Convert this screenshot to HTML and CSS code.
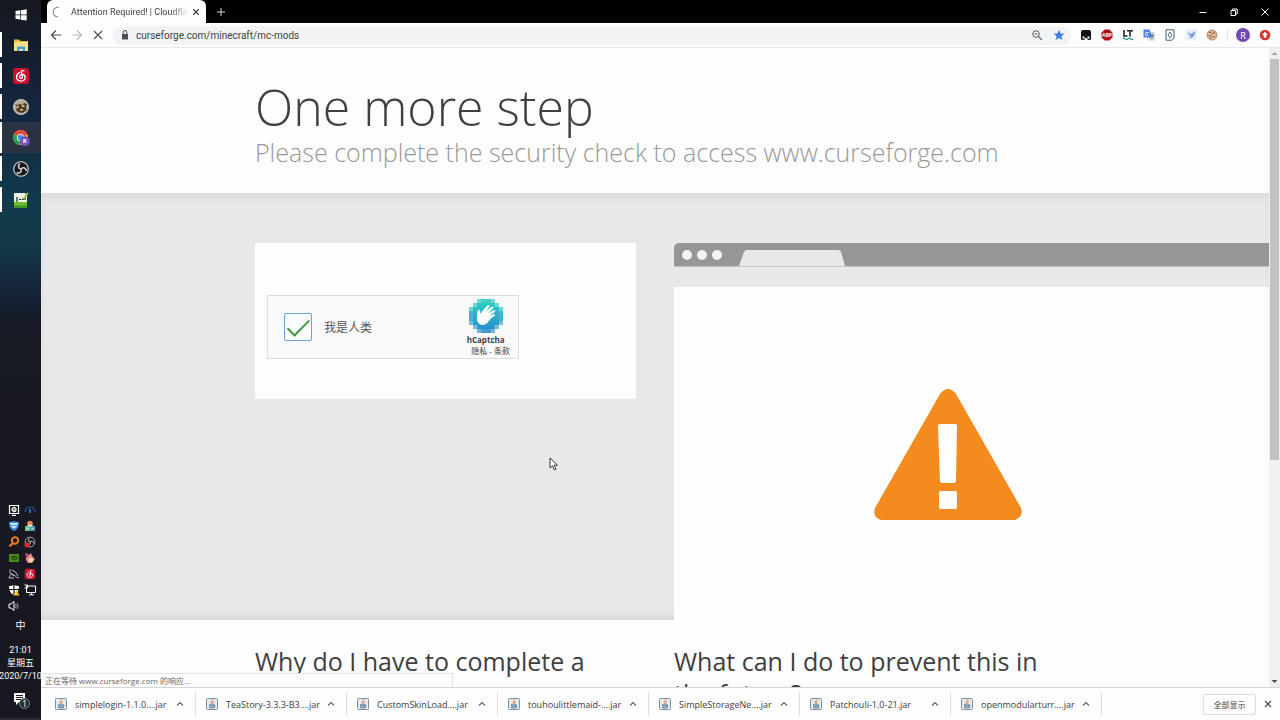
FILE: index.html
```html
<!DOCTYPE html>
<html lang="zh-CN">
<head>
    <meta charset="UTF-8">
    <meta name="viewport" content="width=device-width, initial-scale=1.0">
    <title>Attention Required! | Cloudflare</title>
    <link rel="stylesheet" href="styles.css">
</head>
<body>
    <!-- shared icons -->
    <svg class="sprite" width="0" height="0" aria-hidden="true">
        <symbol id="java" viewBox="0 0 12 12">
            <rect x=".5" y=".5" width="11" height="11" rx="1" fill="#e3ebf1" stroke="#7d8f9c"/>
            <path d="M6.800 1.500C7 3 4 3.200 5.400 5.600M7.800 3.200C5.800 4.300 7.300 5 6.400 6" fill="none" stroke="#d9783a" stroke-width="1"/>
            <path d="M3.300 6.800h4.600v1.400H3.700zM3 9.500q3 1 6 0M8 7c1.800 0 1 1.400 0 1.400" fill="none" stroke="#47718f" stroke-width=".9"/>
        </symbol>
        <symbol id="caret" viewBox="0 0 8 8">
            <path d="M1 5.500 4 2.500l3 3" fill="none" stroke="#5f6368" stroke-width="1.1"/>
        </symbol>
        <symbol id="netease" viewBox="0 0 18 18">
            <rect x="1" y="1" width="16" height="16" rx="3" fill="#c8102e"/>
            <path d="M12 3.800c-2-.8-3 .3-2.600 1.900l1 3.800c.4 2.300-2.800 2.500-2.800.2 0-3 5.600-3.300 5.600 1 0 4.600-8.600 4.600-8.600-.6 0-2.200 1.200-3.800 3-4.400" fill="none" stroke="#fff" stroke-width="1.3" stroke-linecap="round"/>
        </symbol>
        <symbol id="obs" viewBox="0 0 18 18">
            <circle cx="9" cy="9" r="7.300" fill="#17181c" stroke="#d5d5d8" stroke-width="1.1"/>
            <path d="M9 9C5.800 8.500 5.800 5 8 3.600M9 9c1.200 3-1.500 5-4.500 3.600M9 9c2-2.500 5.500-1 5.400 2" fill="none" stroke="#d5d5d8" stroke-width="1.500"/>
        </symbol>
    </svg>

    <div class="desktop">
        <aside class="taskbar">
            <nav class="apps">
                <button class="app start" aria-label="开始">
                    <svg viewBox="0 0 18 18"><path d="M3.500 5 8 4.300v4.200H3.500zM8.700 4.200l6-.9v5.200h-6zM3.500 9.300H8v4.200l-4.500-.7zM8.700 9.300h6v5.300l-6-.9z" fill="#fff"/></svg>
                </button>
                <button class="app open" aria-label="文件资源管理器">
                    <svg viewBox="0 0 18 18"><path d="M2 3.500h5l1.500 1.500H16v10H2z" fill="#e9bd4a"/><path d="M2 6h14v9H2z" fill="#fbe08a"/><path d="M5 15v-4.500h8V15h-2.200v-2H7.200v2z" fill="#39a7dc"/></svg>
                </button>
                <button class="app open" aria-label="网易云音乐"><svg><use href="#netease"/></svg></button>
                <button class="app open" aria-label="游戏">
                    <svg viewBox="0 0 18 18"><circle cx="9" cy="9" r="7.800" fill="#b3aaa0"/><path d="M3 5.500 5 7l3-1 2 1 2-2 3 1-1 4 1 2-3 2-2 1-4-1-2-2 1-2z" fill="#4a3726"/><path d="M4.500 8l2-.5.500 2-1.500 1zM9 8l2.500-1.500L13 8l-2 1.500zM7 12l3-1.500 1.500 1.500-2 1z" fill="#d9b779"/><circle cx="9" cy="9" r="7.500" fill="none" stroke="#cfcac5" stroke-width=".8"/></svg>
                </button>
                <button class="app open active" aria-label="Chrome">
                    <svg viewBox="0 0 18 18"><circle cx="8.500" cy="8.500" r="7.500" fill="#e9b93b"/><path d="M8.500 8.500 2 4.700A7.500 7.500 0 0 1 15.500 5.500z" fill="#df4b3b"/><path d="M8.500 8.500 2 4.700A7.500 7.500 0 0 0 8 16z" fill="#2e9e5b"/><circle cx="8.500" cy="8.500" r="3.600" fill="#fff"/><circle cx="8.500" cy="8.500" r="2.800" fill="#4a8af4"/><circle cx="12.800" cy="12.300" r="5" fill="#7550bb"/><text x="12.800" y="14.300" class="badge-letter">R</text></svg>
                </button>
                <button class="app open" aria-label="OBS"><svg><use href="#obs"/></svg></button>
                <button class="app open" aria-label="Notepad++">
                    <svg viewBox="0 0 18 18"><path d="M2 2h11l2 2v13H2z" fill="#eef3e4"/><path d="M2 11h13v6H2z" fill="#6fbe2f"/><path d="M2 14.500h13V17H2z" fill="#3f9427"/><path d="M5 6v5M7 8.500h2M10 8.500h2M13 6v3" stroke="#1d2a1d" stroke-width="1.200"/><path d="m11 8 5-6" stroke="#a5cb4b" stroke-width="1.800"/></svg>
                </button>
            </nav>

            <div class="tray">
                <svg viewBox="0 0 12 12"><path d="M1.500 1.500h9v8h-9zM4 11.300h4" fill="none" stroke="#fff" stroke-width="1.200"/><circle cx="6" cy="5.500" r="2" fill="none" stroke="#fff" stroke-width="1.200"/><path d="M6 2.500v6" stroke="#fff"/></svg>
                <svg viewBox="0 0 12 12"><path d="M1 8a5 5 0 0 1 10 0" fill="none" stroke="#184d8c" stroke-width="1.500"/><path d="M6 5v4" stroke="#2a78c8" stroke-width="1.800"/></svg>
                <svg viewBox="0 0 12 12"><path d="M1 2q3 0 5-1 2 1 5 1 0 7-5 9-5-2-5-9z" fill="#3a94e0"/><path d="M2.500 3.500Q6 5 9.500 3.500M3.500 6 6 7.500 8.500 6" fill="none" stroke="#fff" stroke-width="1.400"/></svg>
                <svg viewBox="0 0 12 12"><path d="M1 6h5v5H1z" fill="#68c48b"/><path d="M6 6h5v5H6z" fill="#4b9eb6"/><circle cx="6" cy="3.500" r="2.800" fill="#e7824f"/><path d="M4 5h4v1H4zM2.500 8.500h2M7.500 8.500h2" stroke="#f1dfc2" fill="#f1dfc2"/></svg>
                <svg viewBox="0 0 12 12"><circle cx="7" cy="4.500" r="3.200" fill="none" stroke="#ec7a25" stroke-width="2"/><path d="M4.800 7 1.500 10.500" stroke="#ec7a25" stroke-width="2.200"/></svg>
                <svg viewBox="0 0 12 12"><use href="#obs" width="12" height="12"/><circle cx="3" cy="9" r="2.500" fill="#e02c2c"/></svg>
                <svg viewBox="0 0 12 12"><path d="M1 2h10v8H1z" fill="#4c8c17"/><path d="M2.500 6Q6 2 9.500 6 6 9.500 4 6.500 6 4.500 7.300 6" fill="none" stroke="#1c3808"/></svg>
                <svg viewBox="0 0 12 12"><path d="m2 1 3 2 2-2 1 3 3 3-3 4H4L2 8z" fill="#f28b83"/><path d="m1 1 4 3-3 2z" fill="#b5338b"/><circle cx="7" cy="8" r="2.200" fill="#ffd6b0"/></svg>
                <svg viewBox="0 0 12 12"><path d="M2 1v4l4 3M1 10q2-6 5-3t5 3M1 10h5M4 2q4 1 6 6" fill="none" stroke="#ccc" stroke-width=".900"/></svg>
                <svg viewBox="0 0 18 18"><use href="#netease"/></svg>
                <svg viewBox="0 0 12 12"><path d="M1 2q3 0 5-1 2 1 5 1 0 7-5 9-5-2-5-9z" fill="#fff"/><path d="M6 1v10M1 5.500h10" stroke="#17181f" stroke-width="1.200"/><path d="m8.500 6 3 5.500h-6z" fill="#f5c52b"/></svg>
                <svg viewBox="0 0 12 12"><path d="M2.500 2h9v6.500h-9zM5 10.800h5M7.500 8.500v2M.5 1h3v3h-3" fill="none" stroke="#fff" stroke-width="1"/></svg>
                <svg viewBox="0 0 12 12"><path d="M1 4h2l3-2.500v9L3 8H1z" fill="none" stroke="#fff"/><path d="M7.500 4q1.500 2 0 4M9 3q2.500 3 0 6" fill="none" stroke="#aaa" stroke-width=".900"/></svg>
            </div>
            <div class="ime">中</div>
            <div class="clock">
                <span>21:01</span>
                <span>星期五</span>
                <span>2020/7/10</span>
            </div>
            <button class="notice" aria-label="通知">
                <svg viewBox="0 0 20 20"><path d="M3 2h11v9H8l-3 3v-3H3z" fill="#fff"/><path d="M5 4.500h7M5 6.500h7M5 8.500h5" stroke="#191922"/><circle cx="13.500" cy="12.500" r="5" fill="#2a2a31" stroke="#8a8a8f"/><text x="13.500" y="15.500" class="notice-count">1</text></svg>
            </button>
        </aside>

        <div class="browser">
            <header class="titlebar">
                <div class="tab">
                    <svg class="spinner" viewBox="0 0 12 12"><path d="M7 1.300C-.5.500-.5 11 6 10.800" fill="none" stroke="#8a8d91" stroke-width="1.100"/></svg>
                    <span class="tab-title">Attention Required! | Cloudflare</span>
                    <button class="tab-close" aria-label="关闭标签页"><svg viewBox="0 0 10 10"><path d="m2.200 2.200 5.600 5.600m0-5.600L2.200 7.800" stroke="#333" stroke-width="1.200"/></svg></button>
                </div>
                <button class="new-tab" aria-label="新标签页"><svg viewBox="0 0 10 10"><path d="M5 1v8M1 5h8" stroke="#ddd"/></svg></button>
                <div class="window-buttons">
                    <button aria-label="最小化"><svg viewBox="0 0 10 10"><path d="M1.500 5.500h7" stroke="#fff"/></svg></button>
                    <button aria-label="还原"><svg viewBox="0 0 10 10"><path d="M2 3.500h4.500V8.500H2zM3.500 3.500V2h4.700v5H6.500" fill="none" stroke="#fff"/></svg></button>
                    <button aria-label="关闭"><svg viewBox="0 0 10 10"><path d="m1.500 1.500 7 7m0-7-7 7" stroke="#fff"/></svg></button>
                </div>
            </header>

            <div class="toolbar">
                <button aria-label="后退"><svg viewBox="0 0 12 12"><path d="M11 6H1.500M6 1.500 1.500 6 6 10.500" fill="none" stroke="#4b4e52" stroke-width="1.200"/></svg></button>
                <button aria-label="前进"><svg viewBox="0 0 12 12"><path d="M1 6h9.500M6 1.500 10.500 6 6 10.500" fill="none" stroke="#b9bbbe" stroke-width="1.200"/></svg></button>
                <button aria-label="停止"><svg viewBox="0 0 12 12"><path d="m2 2 8 8m0-8-8 8" stroke="#4b4e52" stroke-width="1.200"/></svg></button>
                <div class="omnibox">
                    <svg viewBox="0 0 12 12"><path d="M3 5h6v5.500H3z" fill="#4b4e52"/><path d="M4.200 5V3.300a1.800 1.800 0 0 1 3.600 0V5" fill="none" stroke="#4b4e52"/></svg>
                    <input class="url" type="text" aria-label="地址" value="curseforge.com/minecraft/mc-mods">
                    <svg viewBox="0 0 12 12"><circle cx="5" cy="5" r="3.300" fill="none" stroke="#55585c"/><path d="m7.500 7.500 3.300 3.300M3.500 5h3" stroke="#55585c" stroke-width="1.100"/></svg>
                    <svg viewBox="0 0 12 12"><path d="m6 .8 1.500 3.600 3.900.3-3 2.500 1 3.900L6 9l-3.400 2.100 1-3.900-3-2.500 3.900-.3z" fill="#3b7de0"/></svg>
                </div>
                <div class="extensions">
                    <svg viewBox="0 0 12 12"><path d="M1 3q0-2 2-2h6q2 0 2 2v7q0 1-2 1t-2-2H5q0 2-2 2t-2-1z" fill="#111"/><path d="M2.500 7.500h2v2h-2zM7.500 7.500h2v2h-2z" fill="#fff"/></svg>
                    <svg viewBox="0 0 12 12"><path d="M3.700.5h4.600l3.200 3.200v4.600l-3.200 3.200H3.700L.5 8.300V3.700z" fill="#b10f17"/><text x="6" y="8" class="abp">ABP</text></svg>
                    <svg viewBox="0 0 12 12"><path d="M2 1v6h3.500M5 1.700h6M8 1.700V7.500" fill="none" stroke="#222" stroke-width="1.600"/><path d="M.8 9.800q1.300-1.500 2.600 0t2.600 0 2.600 0 2.600 0" fill="none" stroke="#2a9595" stroke-width="1.200"/></svg>
                    <svg viewBox="0 0 12 12"><path d="M5 3h6.500v8.500H6z" fill="#c9d2dc"/><path d="M.5.5h6l2.500 8H.5z" fill="#4a83e2"/><path d="M6 3.500H4a1.500 1.500 0 1 0 .5 2.800V5" fill="none" stroke="#fff" stroke-width=".8"/><path d="M7.500 6h3.500M9 5v1q0 2 2 3M10 6q0 2-2 3" fill="none" stroke="#596a80" stroke-width=".8"/></svg>
                    <svg viewBox="0 0 12 12"><path d="M2 .8h8v8.200L8 11.200H2z" fill="#fff" stroke="#3e6078"/><path d="m6 3 2 3-2 3-2-3z" fill="none" stroke="#3e6078" stroke-width=".9"/></svg>
                    <svg viewBox="0 0 12 12"><path d="M.5.5h11v11H.5z" fill="#e8eefb"/><path d="m2 3 4 2 4.500-3-1 4L7.500 8.500 4 9.500 5.500 7.500z" fill="#7d9be8"/></svg>
                    <svg viewBox="0 0 12 12"><circle cx="6" cy="6" r="5" fill="#e0b38c" stroke="#a17a5a" stroke-width=".8"/><path d="M3 3.500h2M7 3l2 2M2.500 6.500 5 6M6.500 7l2.500 1M4 9l2-1M6 4v1.500" stroke="#6d452c" stroke-width=".8"/><path d="M3 5h2M7 6h2M6 9.500h1.500" stroke="#f7e0c6"/></svg>
                </div>
                <button class="avatar" aria-label="用户">R</button>
                <button class="update" aria-label="更新"><svg viewBox="0 0 12 12"><circle cx="6" cy="6" r="5.300" fill="#d5342b"/><path d="M6 2.700 9 6H7.300v2.700H4.700V6H3z" fill="#fff"/></svg></button>
            </div>

            <div class="viewport">
                <main class="page">
                    <div class="wrapper heading">
                        <h1>One more step</h1>
                        <h2 class="subheadline">Please complete the security check to access www.curseforge.com</h2>
                    </div>

                    <section class="highlight">
                        <div class="wrapper columns">
                            <form class="captcha-container">
                                <div class="captcha">
                                    <input type="checkbox" id="human" checked>
                                    <label for="human">我是人类</label>
                                    <div class="captcha-brand">
                                        <svg viewBox="0 0 36 36">
                                            <defs>
                                                <linearGradient id="teal" x1="0" y1="0" x2="0" y2="1">
                                                    <stop offset="0" stop-color="#2dcdc0"/>
                                                    <stop offset="1" stop-color="#2b8fd0"/>
                                                </linearGradient>
                                            </defs>
                                            <path d="M9 1h18v4h4v4h4v18h-4v4h-4v4H9v-4H5v-4H1V9h4V5h4z" fill="url(#teal)" opacity=".65"/>
                                            <path d="M13 1h10v4h4v4h4v4h4v10h-4v4h-4v4h-4v4H13v-4H9v-4H5v-4H1V13h4V9h4V5h4z" fill="url(#teal)" opacity=".7"/>
                                            <path d="M10 5h16v4h5v18h-5v4H10v-4H5V9h5z" fill="url(#teal)"/>
                                            <path d="M9 20c0-4 0-7 1.500-8s2 1 1.500 4l5-6 2.500-2.500c1.500-1.200 2.800 0 1.700 1.500L18 13.500l5.500-4.500c1.500-1 2.600.4 1.400 1.600l-5 5 5.600-3.400c1.500-.8 2.300.7 1.100 1.700l-5.300 4 4.300-1.600c1.600-.4 2 1.200.7 1.800-3.800 1.900-4.800 4.400-7 7-4.800 4.200-11 1-10.300-5z" fill="#fff"/>
                                        </svg>
                                        <strong>hCaptcha</strong>
                                        <span class="captcha-links"><a href="#">隐私</a> - <a href="#">条款</a></span>
                                    </div>
                                </div>
                            </form>

                            <div class="mock">
                                <div class="mock-bar">
                                    <i></i><i></i><i></i>
                                    <svg viewBox="0 0 106 16"><path d="M0 16 5 2q1-2 3-2h91q2 0 3 2l4 14z" fill="#e8e8e8"/></svg>
                                </div>
                                <div class="mock-body">
                                    <svg viewBox="0 0 148 132"><path d="M66 5q8-10 16 0l65 114q3 8-6 12H7q-9-3-6-12z" fill="#f48b1f"/><path d="M67 35h14q2 0 2 2l-1 55q0 2-2 2H68q-2 0-2-2l-2-55q0-2 3-2zM67 102h14q2 0 2 2v14q0 2-2 2H67q-2 0-2-2v-14q0-2 2-2z" fill="#fff"/></svg>
                                </div>
                            </div>
                        </div>
                    </section>

                    <section class="wrapper columns questions">
                        <h2>Why do I have to complete a CAPTCHA?</h2>
                        <h2>What can I do to prevent this in the future?</h2>
                    </section>
                </main>

                <div class="scrollbar">
                    <svg viewBox="0 0 11 11"><path d="m2.500 7 3-3 3 3z" fill="#a3a3a3"/></svg>
                    <div class="track"><div class="thumb"></div></div>
                    <svg viewBox="0 0 11 11"><path d="m2.500 4 3 3 3-3z" fill="#505050"/></svg>
                </div>
                <div class="status">正在等待 www.curseforge.com 的响应...</div>
            </div>

            <footer class="downloads">
                <button class="download"><svg class="file"><use href="#java"/></svg><span>simplelogin-1.1.0….jar</span><svg class="caret"><use href="#caret"/></svg></button>
                <button class="download"><svg class="file"><use href="#java"/></svg><span>TeaStory-3.3.3-B3….jar</span><svg class="caret"><use href="#caret"/></svg></button>
                <button class="download"><svg class="file"><use href="#java"/></svg><span>CustomSkinLoad….jar</span><svg class="caret"><use href="#caret"/></svg></button>
                <button class="download"><svg class="file"><use href="#java"/></svg><span>touhoulittlemaid-….jar</span><svg class="caret"><use href="#caret"/></svg></button>
                <button class="download"><svg class="file"><use href="#java"/></svg><span>SimpleStorageNe….jar</span><svg class="caret"><use href="#caret"/></svg></button>
                <button class="download"><svg class="file"><use href="#java"/></svg><span>Patchouli-1.0-21.jar</span><svg class="caret"><use href="#caret"/></svg></button>
                <button class="download"><svg class="file"><use href="#java"/></svg><span>openmodularturr….jar</span><svg class="caret"><use href="#caret"/></svg></button>
                <button class="show-all">全部显示</button>
                <button class="close-shelf" aria-label="关闭"><svg viewBox="0 0 10 10"><path d="m2 2 6 6m0-6-6 6" stroke="#444" stroke-width="1.100"/></svg></button>
            </footer>
        </div>
    </div>

    <svg class="cursor" viewBox="0 0 10 14"><path d="M1 1v10l2.500-2.200L5.300 13l1.700-.8-1.800-4H8.500z" fill="#fff" stroke="#222" stroke-width=".9"/></svg>
</body>
</html>
```
FILE: styles.css
```css
* {
    margin: 0;
    padding: 0;
    box-sizing: border-box;
}

body {
    font-family: 'Open Sans', 'Noto Sans CJK SC', sans-serif;
    font-size: 10px;
    color: #404040;
    overflow: hidden;
}

button {
    border: none;
    background: none;
    font: inherit;
    color: inherit;
    display: flex;
    align-items: center;
    justify-content: center;
}

svg {
    display: block;
    flex-shrink: 0;
}

.sprite {
    position: absolute;
}

.desktop {
    display: flex;
    height: 100vh;
}

/* Taskbar */
.taskbar {
    width: 41px;
    flex-shrink: 0;
    display: flex;
    flex-direction: column;
    color: #fff;
    background: linear-gradient(#15171e 0, #14263f 110px, #113a4c 200px, #133948 245px, #152338 290px, #171923 330px, #17171f 100%);
}

.apps {
    margin-bottom: auto;
}

.app {
    width: 100%;
    height: 31px;
    border-left: 2px solid transparent;
    padding-right: 2px;
}

.app.start {
    height: 29px;
}

.app.open {
    border-image: linear-gradient(transparent 3px, #fff 3px, #fff 28px, transparent 28px) 0 0 0 2;
}

.app.active {
    background: #2b3342;
    border-image: none;
    border-color: #fff;
}

.app svg {
    width: 18px;
    height: 18px;
}

.badge-letter {
    font-size: 6px;
    font-weight: 700;
    fill: #fff;
    text-anchor: middle;
}

.tray {
    display: grid;
    grid-template-columns: 16px 16px;
    grid-auto-rows: 16px;
    place-items: center;
    padding-left: 6px;
}

.tray svg {
    width: 12px;
    height: 12px;
}

.ime {
    text-align: center;
    line-height: 14px;
    margin: 4px 0 12px;
}

.clock {
    display: flex;
    flex-direction: column;
    align-items: center;
    font-family: Roboto, 'Noto Sans CJK SC', sans-serif;
    font-size: 9px;
    line-height: 13px;
    white-space: nowrap;
}

.notice {
    height: 37px;
    border-bottom: 2px solid #2b2b33;
}

.notice svg {
    width: 20px;
    height: 20px;
}

.notice-count {
    font-size: 9px;
    fill: #fff;
    text-anchor: middle;
}

/* Browser chrome */
.browser {
    flex: 1;
    min-width: 0;
    display: flex;
    flex-direction: column;
    background: #fdfdfd;
}

.titlebar {
    height: 23px;
    background: #000;
    display: flex;
    align-items: center;
    padding-left: 6px;
}

.tab {
    width: 159px;
    height: 23px;
    background: #fdfdfd;
    border-radius: 6px 6px 0 0;
    display: flex;
    align-items: center;
    padding: 0 5px;
}

.spinner {
    width: 12px;
    height: 12px;
    margin-right: 7px;
}

.tab-title {
    flex: 1;
    min-width: 0;
    overflow: hidden;
    white-space: nowrap;
    font-family: Roboto, 'Noto Sans CJK SC', sans-serif;
    font-size: 9px;
    -webkit-mask-image: linear-gradient(to right, #000 85%, transparent);
    mask-image: linear-gradient(to right, #000 85%, transparent);
}

.tab-close {
    margin-left: 3px;
}

.tab-close svg,
.new-tab svg,
.window-buttons svg {
    width: 10px;
    height: 10px;
}

.new-tab {
    width: 30px;
    height: 23px;
}

.window-buttons {
    display: flex;
    margin-left: auto;
}

.window-buttons button {
    width: 31px;
    height: 18px;
}

.toolbar {
    height: 25px;
    display: flex;
    align-items: center;
    padding: 0 5px 0 4px;
    border-bottom: 1px solid #e6e8ea;
}

.toolbar > button {
    width: 21px;
    height: 22px;
}

.toolbar svg {
    width: 12px;
    height: 12px;
}

.omnibox {
    flex: 1;
    height: 19px;
    margin: 0 9px 0 5px;
    padding: 0 6px;
    border-radius: 10px;
    background: #f1f3f4;
    display: flex;
    align-items: center;
    gap: 10px;
}

.url {
    flex: 1;
    min-width: 0;
    margin-left: -5px;
    border: none;
    outline: none;
    background: none;
    font-family: Roboto, 'Noto Sans CJK SC', sans-serif;
    font-size: 10px;
    color: #404347;
}

.extensions {
    display: flex;
    gap: 9px;
    padding-right: 9px;
    border-right: 1px solid #dfe1e3;
}

.abp {
    font-size: 5px;
    font-weight: 700;
    fill: #fff;
    text-anchor: middle;
}

.toolbar > .avatar {
    width: 14px;
    height: 14px;
    margin: 0 4px 0 8px;
    border-radius: 50%;
    background: #7248b5;
    color: #fff;
    font-size: 9px;
}

/* Page */
.viewport {
    flex: 1;
    min-height: 0;
    display: flex;
    position: relative;
}

.page {
    flex: 1;
    min-width: 0;
    overflow: hidden;
}

.wrapper {
    max-width: 800px;
    margin: 0 auto;
}

.columns {
    display: grid;
    grid-template-columns: repeat(2, minmax(0, 1fr));
    gap: 38px;
    align-items: start;
}

.heading {
    padding: 29px 0 26px;
}

h1 {
    font-size: 50px;
    font-weight: 300;
    line-height: 60px;
}

h2 {
    font-size: 25px;
    font-weight: 400;
    line-height: 32px;
}

.heading .subheadline {
    font-weight: 300;
    line-height: 30px;
    color: #999;
    white-space: nowrap;
}

.highlight {
    background: #e8e8e8;
    box-shadow: inset 0 8px 8px -4px #d8d8d8, inset 0 -8px 8px -4px #d8d8d8;
    padding-top: 50px;
}

.captcha-container {
    background: #fdfdfd;
    padding: 52px 12px 40px;
    border-radius: 1px;
}

.captcha {
    width: 252px;
    height: 64px;
    border: 1px solid #dcdcdc;
    background: #f9f9f9;
    display: flex;
    align-items: center;
    padding: 0 10px 0 16px;
}

.captcha input {
    appearance: none;
    width: 28px;
    height: 28px;
    border: 1px solid #6f9fd8;
    border-radius: 2px;
    background: #fbfbfb;
    display: flex;
    justify-content: center;
}

.captcha input:checked::after {
    content: '';
    width: 9px;
    height: 20px;
    border: solid #3f9a45;
    border-width: 0 2px 2px 0;
    transform: rotate(45deg);
}

.captcha label {
    margin-left: 12px;
    font-size: 12px;
    color: #555;
}

.captcha-brand {
    margin-left: auto;
    display: flex;
    flex-direction: column;
    align-items: center;
    font-size: 8px;
    line-height: 11px;
}

.captcha-brand svg {
    width: 36px;
    height: 36px;
}

.captcha-links {
    padding-left: 8px;
    margin-right: -2px;
}

.captcha-links a {
    color: inherit;
    text-decoration: none;
}

/* Browser illustration, runs off the right edge */
.mock {
    width: 800px;
    border-radius: 5px 0 0 0;
    overflow: hidden;
}

.mock-bar {
    height: 24px;
    background: #969696;
    border-bottom: 1px solid #c4c4c4;
    display: flex;
    align-items: center;
    gap: 5px;
    padding-left: 8px;
}

.mock-bar i {
    width: 10px;
    height: 10px;
    border-radius: 50%;
    background: #f4f4f4;
}

.mock-bar svg {
    width: 106px;
    height: 16px;
    margin-left: 12px;
    align-self: flex-end;
}

.mock-body {
    margin-top: 20px;
    padding: 102px 200px 99px;
    background: #fdfdfd;
}

.mock-body svg {
    width: 148px;
    height: 132px;
}

.questions {
    padding-top: 25px;
}

.scrollbar {
    width: 11px;
    background: #f0f0f0;
    display: flex;
    flex-direction: column;
}

.scrollbar svg {
    width: 11px;
    height: 11px;
}

.track {
    flex: 1;
    padding: 0 1px;
}

.thumb {
    height: 65%;
    background: #c1c1c1;
}

.status {
    position: absolute;
    left: 0;
    bottom: 0;
    width: 412px;
    height: 14px;
    padding-left: 4px;
    border: solid #e2e2e2;
    border-width: 1px 1px 0 0;
    background: #fdfdfd;
    font-size: 8px;
    line-height: 13px;
    color: #666;
}

/* Download shelf */
.downloads {
    height: 33px;
    border-top: 1px solid #d3d5d8;
    display: flex;
    align-items: center;
    padding: 0 7px 0 4px;
}

.download {
    width: 151px;
    height: 24px;
    border-right: 1px solid #dadce0;
    justify-content: flex-start;
    padding: 0 11px 0 10px;
    font-size: 9px;
}

.download span {
    margin: 0 auto 0 8px;
    white-space: nowrap;
}

.file {
    width: 12px;
    height: 12px;
}

.caret {
    width: 8px;
    height: 8px;
}

.show-all {
    width: 53px;
    height: 21px;
    margin-left: auto;
    border: 1px solid #dadce0;
    border-radius: 2px;
    font-size: 8px;
}

.close-shelf {
    margin-left: 7px;
}

.close-shelf svg {
    width: 10px;
    height: 10px;
}

/* Mouse pointer */
.cursor {
    position: absolute;
    left: 549px;
    top: 457px;
    width: 10px;
    height: 14px;
}
```
